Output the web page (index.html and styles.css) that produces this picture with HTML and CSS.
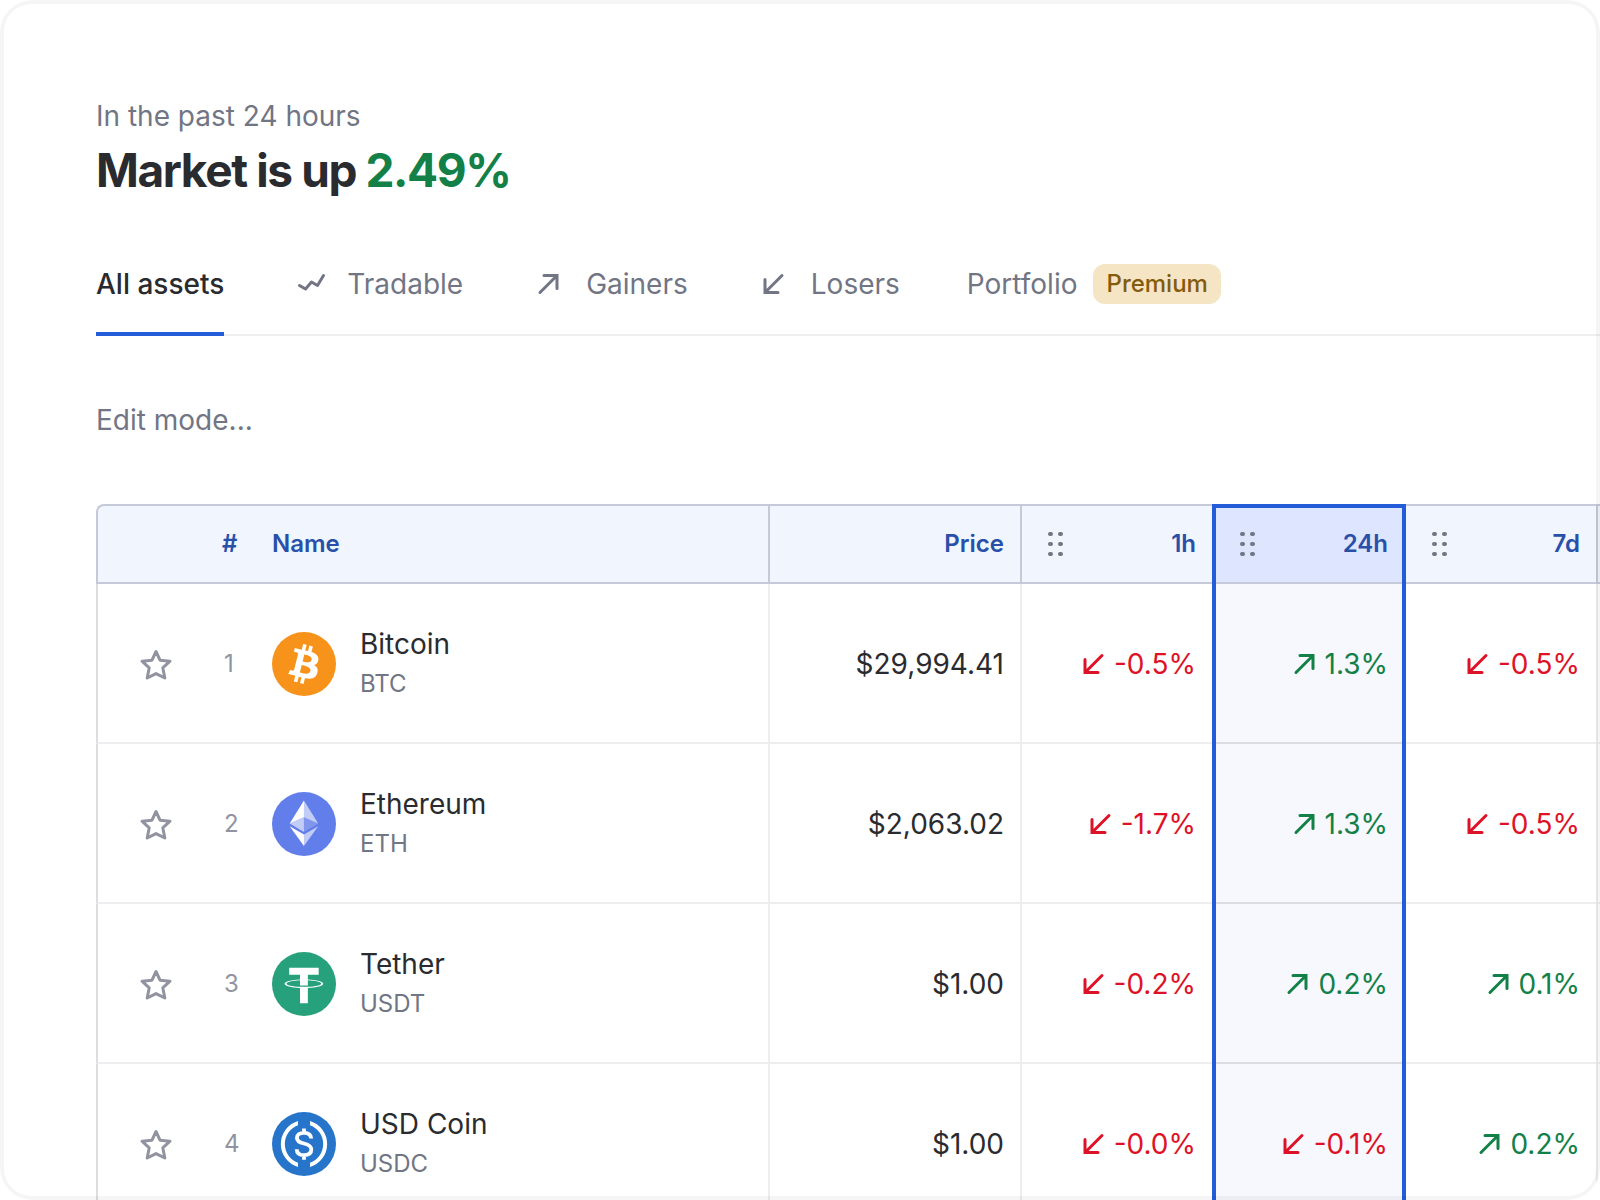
FILE: index.html
```html
<!DOCTYPE html>
<html lang="en">
<head>
    <meta charset="UTF-8">
    <meta name="viewport" content="width=device-width, initial-scale=1.0">
    <title>Market overview</title>
    <link rel="stylesheet" href="styles.css">
</head>
<body>
    <svg class="sprite" aria-hidden="true">
        <symbol id="arrow-up" viewBox="0 0 24 24">
            <path d="M3 20.5L20 3.5M7 3.5H20V16.5" fill="none" stroke="currentColor" stroke-width="3" stroke-linecap="round"/>
        </symbol>
        <symbol id="arrow-down" viewBox="0 0 24 24">
            <path d="M20 3.5L3 20.5M3 7.5V20.5H16" fill="none" stroke="currentColor" stroke-width="3" stroke-linecap="round"/>
        </symbol>
        <symbol id="star" viewBox="0 0 36 36">
            <path d="M18 5.5L22 14.2L32 15.2L24.8 21.8L26.8 32L18 27.6L9.2 32L11.2 21.8L4 15.2L14 14.2Z" fill="none" stroke="currentColor" stroke-width="3" stroke-linejoin="round"/>
        </symbol>
        <symbol id="handle" viewBox="0 0 16 24">
            <g fill="currentColor">
                <rect x="0" y="0" width="5" height="4" rx="2"/><rect x="10" y="0" width="5" height="4" rx="2"/>
                <rect x="0" y="10" width="5" height="4" rx="2"/><rect x="10" y="10" width="5" height="4" rx="2"/>
                <rect x="0" y="20" width="5" height="4" rx="2"/><rect x="10" y="20" width="5" height="4" rx="2"/>
            </g>
        </symbol>
    </svg>

    <main class="card">
        <header>
            <p class="subtitle">In the past 24 hours</p>
            <h1>Market is up <span class="up">2.49%</span></h1>
        </header>

        <nav class="tabs">
            <a class="tab active" href="#all">All assets</a>
            <a class="tab" href="#tradable">
                <svg class="tab-icon" viewBox="0 0 40 40"><path d="M8.5 21.5L14.5 25L20.500 18L26.500 21.500L32.500 11.500" fill="none" stroke="currentColor" stroke-width="3" stroke-linecap="round" stroke-linejoin="round"/></svg>
                Tradable
            </a>
            <a class="tab" href="#gainers">
                <svg class="tab-icon" viewBox="-7 -8 40 40"><use href="#arrow-up" width="24" height="24"/></svg>
                Gainers
            </a>
            <a class="tab" href="#losers">
                <svg class="tab-icon" viewBox="-7 -8 40 40"><use href="#arrow-down" width="24" height="24"/></svg>
                Losers
            </a>
            <a class="tab" href="#portfolio">Portfolio <span class="badge">Premium</span></a>
        </nav>

        <p class="mode">Edit mode...</p>

        <table>
            <colgroup>
                <col class="col-star">
                <col class="col-rank">
                <col>
                <col class="col-price">
                <col class="col-change">
                <col class="col-change">
                <col class="col-change">
                <col class="col-end">
            </colgroup>
            <thead>
                <tr>
                    <th class="first"></th>
                    <th>#</th>
                    <th>Name</th>
                    <th class="line num">Price</th>
                    <th class="line"><div class="head"><svg class="handle"><use href="#handle"/></svg>1h</div></th>
                    <th class="line dragged"><div class="head"><svg class="handle"><use href="#handle"/></svg>24h</div></th>
                    <th class="line"><div class="head"><svg class="handle"><use href="#handle"/></svg>7d</div></th>
                    <th class="line"></th>
                </tr>
            </thead>
            <tbody>
                <tr>
                    <td class="first"><button class="star" aria-label="Watch Bitcoin"><svg><use href="#star"/></svg></button></td>
                    <td class="rank">1</td>
                    <td>
                        <div class="asset">
                            <svg class="coin" viewBox="0 0 32 32">
                                <circle cx="16" cy="16" r="16" fill="#f7931a"/>
                                <path fill="#fff" d="M23.189 14.02c.314-2.096-1.283-3.223-3.465-3.975l.708-2.84-1.728-.43-.69 2.765c-.454-.114-.92-.22-1.385-.326l.695-2.783L15.596 6l-.708 2.839c-.376-.086-.746-.17-1.104-.26l.002-.009-2.384-.595-.46 1.846s1.283.294 1.256.312c.7.175.826.638.805 1.006l-.806 3.235c.048.012.11.03.18.057l-.183-.045-1.13 4.532c-.086.212-.303.531-.793.41.018.025-1.256-.313-1.256-.313l-.858 1.978 2.25.561c.418.105.828.215 1.231.318l-.715 2.872 1.727.43.708-2.84c.472.127.93.245 1.378.357l-.706 2.828 1.728.43.715-2.866c2.948.558 5.164.333 6.097-2.333.752-2.146-.037-3.385-1.588-4.192 1.13-.26 1.98-1.003 2.207-2.538zm-3.95 5.538c-.533 2.147-4.148.986-5.32.695l.95-3.805c1.172.293 4.929.872 4.37 3.11zm.535-5.569c-.487 1.953-3.495.96-4.47.717l.86-3.45c.975.243 4.118.696 3.61 2.733z"/>
                            </svg>
                            <div class="name">Bitcoin <span class="ticker">BTC</span></div>
                        </div>
                    </td>
                    <td class="line num">$29,994.41</td>
                    <td class="line"><div class="change down"><svg><use href="#arrow-down"/></svg>-0.5%</div></td>
                    <td class="line dragged"><div class="change up"><svg><use href="#arrow-up"/></svg>1.3%</div></td>
                    <td class="line"><div class="change down"><svg><use href="#arrow-down"/></svg>-0.5%</div></td>
                    <td class="line"></td>
                </tr>
                <tr>
                    <td class="first"><button class="star" aria-label="Watch Ethereum"><svg><use href="#star"/></svg></button></td>
                    <td class="rank">2</td>
                    <td>
                        <div class="asset">
                            <svg class="coin" viewBox="0 0 32 32">
                                <circle cx="16" cy="16" r="16" fill="#627eea"/>
                                <g fill="#fff" transform="translate(.3 .4) scale(.95)">
                                    <path fill-opacity=".602" d="M16.498 4v8.870l7.497 3.350z"/>
                                    <path d="M16.498 4L9 16.220l7.498-3.350z"/>
                                    <path fill-opacity=".602" d="M16.498 21.968v6.027L24 17.616z"/>
                                    <path d="M16.498 27.995v-6.028L9 17.616z"/>
                                    <path fill-opacity=".2" d="M16.498 20.573l7.497-4.353-7.497-3.348z"/>
                                    <path fill-opacity=".602" d="M9 16.220l7.498 4.353v-7.701z"/>
                                </g>
                            </svg>
                            <div class="name">Ethereum <span class="ticker">ETH</span></div>
                        </div>
                    </td>
                    <td class="line num">$2,063.02</td>
                    <td class="line"><div class="change down"><svg><use href="#arrow-down"/></svg>-1.7%</div></td>
                    <td class="line dragged"><div class="change up"><svg><use href="#arrow-up"/></svg>1.3%</div></td>
                    <td class="line"><div class="change down"><svg><use href="#arrow-down"/></svg>-0.5%</div></td>
                    <td class="line"></td>
                </tr>
                <tr>
                    <td class="first"><button class="star" aria-label="Watch Tether"><svg><use href="#star"/></svg></button></td>
                    <td class="rank">3</td>
                    <td>
                        <div class="asset">
                            <svg class="coin" viewBox="0 0 32 32">
                                <circle cx="16" cy="16" r="16" fill="#26a17b"/>
                                <path fill="#fff" d="M17.922 17.383v-.002c-.11.008-.677.042-1.942.042-1.01 0-1.721-.03-1.971-.042v.003c-3.888-.171-6.790-.848-6.790-1.658 0-.809 2.902-1.486 6.790-1.660v2.644c.254.018.982.061 1.988.061 1.207 0 1.812-.05 1.925-.06v-2.643c3.880.173 6.775.85 6.775 1.658 0 .81-2.895 1.485-6.775 1.657m0-3.590v-2.366h5.414V7.819H8.595v3.608h5.414v2.365c-4.400.202-7.709 1.074-7.709 2.118 0 1.044 3.309 1.915 7.709 2.116v7.582h3.913v-7.584c4.393-.202 7.694-1.073 7.694-2.116 0-1.043-3.301-1.914-7.694-2.117"/>
                            </svg>
                            <div class="name">Tether <span class="ticker">USDT</span></div>
                        </div>
                    </td>
                    <td class="line num">$1.00</td>
                    <td class="line"><div class="change down"><svg><use href="#arrow-down"/></svg>-0.2%</div></td>
                    <td class="line dragged"><div class="change up"><svg><use href="#arrow-up"/></svg>0.2%</div></td>
                    <td class="line"><div class="change up"><svg><use href="#arrow-up"/></svg>0.1%</div></td>
                    <td class="line"></td>
                </tr>
                <tr>
                    <td class="first"><button class="star" aria-label="Watch USD Coin"><svg><use href="#star"/></svg></button></td>
                    <td class="rank">4</td>
                    <td>
                        <div class="asset">
                            <svg class="coin" viewBox="0 0 64 64">
                                <circle cx="32" cy="32" r="32" fill="#2775ca"/>
                                <path fill="#fff" d="M26 9A24 24 0 0 0 26 55V50.800A20 20 0 0 1 26 13.200ZM38 9A24 24 0 0 1 38 55V50.800A20 20 0 0 0 38 13.200Z"/>
                                <path fill="none" stroke="#fff" stroke-width="3.800" d="M39.200 26.500C39 22.500 36 20.800 32 20.800C27.500 20.800 24.900 22.900 24.900 26C24.900 29.500 28 30.600 32 31.500C36.500 32.500 39.300 33.800 39.300 37.600C39.300 41.200 36.500 43.200 32 43.200C27.500 43.200 24.800 41.200 24.700 37.200M32 16.500V21M32 43V47.800"/>
                            </svg>
                            <div class="name">USD Coin <span class="ticker">USDC</span></div>
                        </div>
                    </td>
                    <td class="line num">$1.00</td>
                    <td class="line"><div class="change down"><svg><use href="#arrow-down"/></svg>-0.0%</div></td>
                    <td class="line dragged"><div class="change down"><svg><use href="#arrow-down"/></svg>-0.1%</div></td>
                    <td class="line"><div class="change up"><svg><use href="#arrow-up"/></svg>0.2%</div></td>
                    <td class="line"></td>
                </tr>
            </tbody>
        </table>
    </main>
</body>
</html>
```
FILE: styles.css
```css
* {
    box-sizing: border-box;
}
body {
    margin: 0;
    background-color: #fff;
    color: #2a2b2f;
    font-family: Inter, "Liberation Sans", sans-serif;
    font-size: 28px;
    line-height: 40px;
}
.sprite {
    display: none;
}
.card {
    position: relative;
    height: 100vh;
    padding: 96px 0 0 96px;
    border-radius: 32px;
    overflow: hidden;
}
/* frame lies over the table where it runs off the card */
.card::after {
    content: "";
    position: absolute;
    inset: 0;
    border: 4px solid rgba(0, 0, 0, 0.04);
    border-radius: 32px;
    pointer-events: none;
}
.subtitle, .mode {
    margin: 0;
    color: #717584;
}
h1 {
    margin: 4px 0 0;
    font-size: 46px;
    font-weight: 700;
    line-height: 60px;
    letter-spacing: -0.03em;
}
.up {
    color: #138048;
}
.down {
    color: #de1226;
}
.tabs {
    display: flex;
    gap: 67px;
    margin-top: 32px;
    box-shadow: inset 0 -2px #efeff1;
}
.tab {
    display: flex;
    align-items: center;
    gap: 16px;
    height: 104px;
    padding-top: 4px;
    border-bottom: 4px solid transparent;
    color: #717584;
    text-decoration: none;
}
.tab.active {
    border-color: #225cd9;
    color: #2a2b2f;
    font-weight: 500;
}
.tab-icon {
    width: 40px;
    height: 40px;
}
.badge {
    padding: 0 13px;
    border-radius: 12px;
    background: #f6e5c4;
    color: #835b0c;
    font-size: 24px;
    font-weight: 500;
}
.mode {
    margin: 64px 0;
}
table {
    width: 100%;
    table-layout: fixed;
    border-spacing: 0;
}
.col-star {
    width: 126px;
}
.col-rank {
    width: 50px;
}
.col-price {
    width: 252px;
}
.col-change {
    width: 192px;
}
.col-end {
    width: 4px;
}
th, td {
    padding: 0;
    border: 0 solid #edeef0;
    border-bottom-width: 2px;
    text-align: left;
}
th {
    height: 80px;
    border-color: #c6cad8;
    border-top-width: 2px;
    background: #f0f5fe;
    color: #2850a8;
    font-size: 24px;
    font-weight: 600;
}
td {
    height: 160px;
    padding-top: 2px;
}
.line, .first {
    border-left-width: 2px;
}
td.first {
    border-left-color: #dbdde1;
}
th.first {
    border-top-left-radius: 8px;
}
.num {
    padding-right: 16px;
    text-align: right;
}
.dragged {
    position: relative;
    background: #f7f8fd;
}
td.dragged {
    border-bottom-color: #dbdde1;
}
th.dragged {
    background: #dee5fe;
}
/* outline of the dragged column, drawn over the cell borders */
.dragged::after {
    content: "";
    position: absolute;
    inset: -2px;
    border: 0 solid #225cd9;
    border-width: 0 4px;
    pointer-events: none;
}
td.dragged::after {
    top: 0;
}
th.dragged::after {
    border-top-width: 4px;
}
.head {
    display: flex;
    align-items: center;
    justify-content: space-between;
    padding: 0 16px 0 26px;
}
.handle {
    width: 16px;
    height: 24px;
    color: #717584;
}
.star {
    display: block;
    margin-left: 40px;
    padding: 0;
    border: 0;
    background: none;
    color: #9194a0;
}
.star svg {
    display: block;
    width: 36px;
    height: 36px;
}
.rank {
    padding-left: 2px;
    color: #9194a0;
    font-size: 24px;
}
.asset {
    display: flex;
    align-items: center;
    gap: 24px;
}
.coin {
    width: 64px;
    height: 64px;
}
.ticker {
    display: block;
    color: #717584;
    font-size: 24px;
}
.change {
    display: flex;
    align-items: center;
    justify-content: flex-end;
    gap: 8px;
    padding-right: 16px;
}
.change svg {
    width: 24px;
    height: 24px;
}
```
